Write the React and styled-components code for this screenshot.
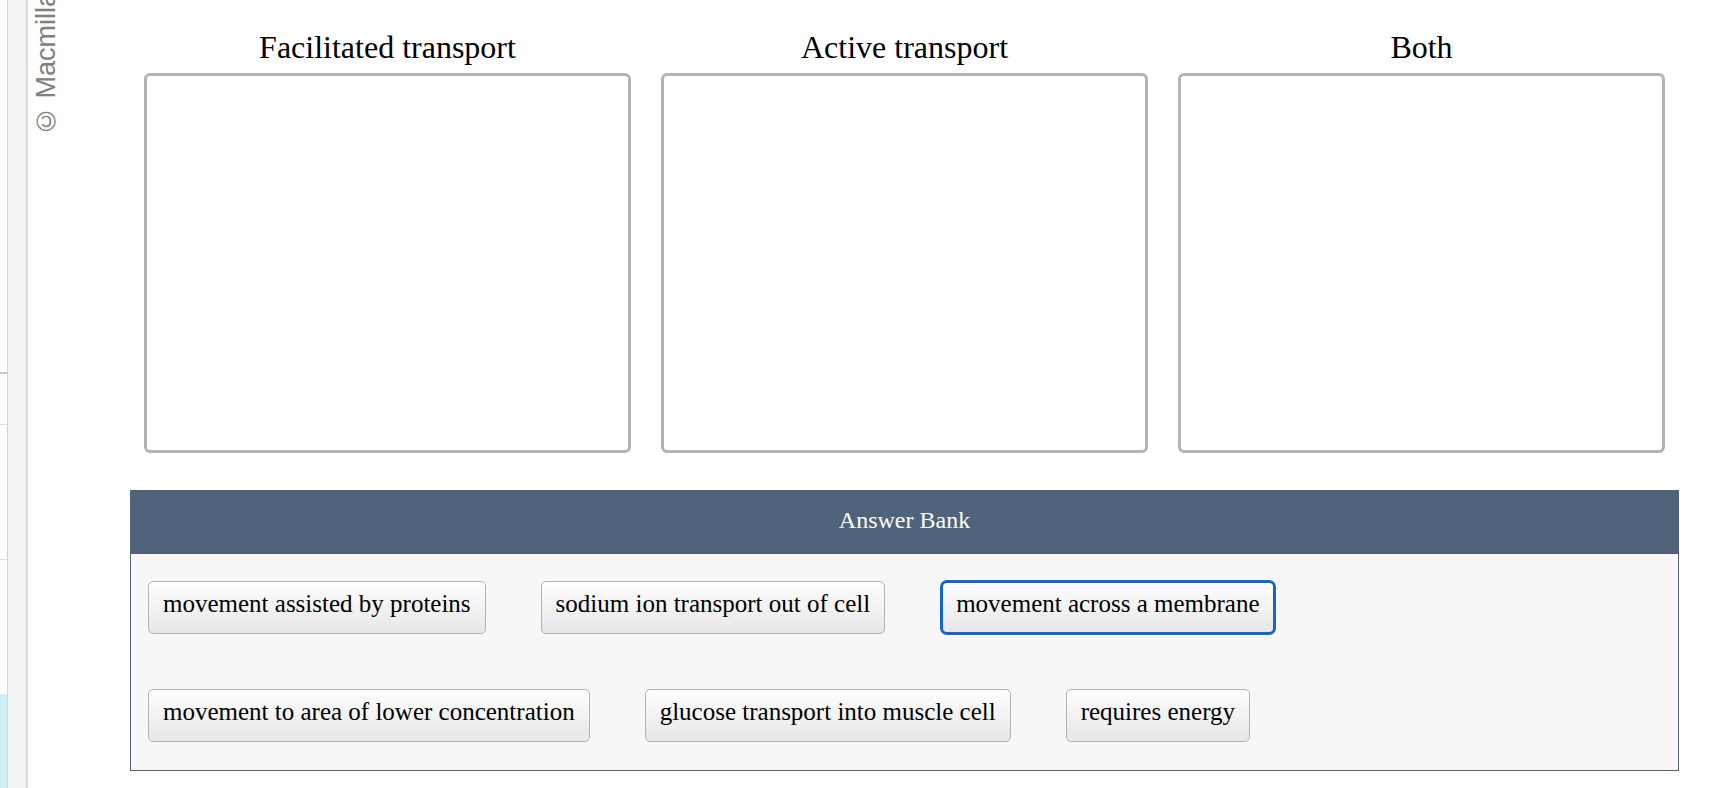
import React from "react";
import styled, { createGlobalStyle } from "styled-components";

const GlobalStyle = createGlobalStyle`
  html, body {
    margin: 0;
    padding: 0;
    background: #ffffff;
  }
  body {
    font-family: "Liberation Serif", "Times New Roman", serif;
    color: #000;
    overflow: hidden;
  }
`;

const Page = styled.div`
  display: flex;
  height: 788px;
  overflow: hidden;
`;

const Sidebar = styled.div`
  display: flex;
  flex: 0 0 28px;
  height: 100%;
`;

const Pane = styled.div`
  display: flex;
  flex-direction: column;
  flex: 0 0 7px;
`;

const Segment = styled.div`
  height: ${p => (p.h ? `${p.h}px` : "auto")};
  flex: ${p => (p.h ? "0 0 auto" : "1 1 auto")};
  background: ${p => p.bg || "#ffffff"};
  border-bottom: ${p => p.line || "none"};
`;

const Rail = styled.div`
  flex: 1 1 auto;
  background: #f2f2f2;
  border-left: 1px solid #d4d4d4;
  border-right: 2px solid #dcdcdc;
`;

const CopyrightCol = styled.div`
  flex: 0 0 102px;
  padding-left: 6px;
  box-sizing: border-box;
`;

const Copyright = styled.div`
  writing-mode: vertical-rl;
  transform: rotate(180deg);
  height: 136px;
  width: 24px;
  overflow: hidden;
  white-space: nowrap;
  font-family: "Liberation Sans", Arial, sans-serif;
  font-size: 27px;
  line-height: 24px;
  color: #808080;
`;

const Main = styled.div`
  flex: 0 0 1549px;
  padding-top: 29px;
`;

const Columns = styled.div`
  display: grid;
  grid-template-columns: repeat(3, 487px);
  column-gap: 30px;
  padding: 0 14px;
`;

const Column = styled.div`
  display: flex;
  flex-direction: column;
`;

const Title = styled.div`
  font-size: 32px;
  line-height: 36px;
  text-align: center;
  margin-bottom: 8px;
`;

const DropBox = styled.div`
  height: 380px;
  box-sizing: border-box;
  border: 3px solid #b4b4b4;
  border-radius: 6px;
  background: #ffffff;
`;

const Bank = styled.div`
  margin-top: 37px;
  border: 1px solid #4f637a;
  background: #f7f7f7;
`;

const BankHeader = styled.div`
  height: 63px;
  box-sizing: border-box;
  padding-bottom: 4px;
  line-height: 59px;
  background: #4f637a;
  color: #ffffff;
  font-size: 24px;
  text-align: center;
`;

const ChipList = styled.div`
  display: flex;
  flex-wrap: wrap;
  gap: 55px;
  padding: 27px 17px 28px;
`;

const Chip = styled.div`
  font-size: 25px;
  line-height: 29px;
  white-space: nowrap;
  border-radius: ${p => (p.selected ? "7px" : "5px")};
  background: linear-gradient(#fefefe, #e7e7e7);
  border: ${p => (p.selected ? "3px solid #1166d2" : "1px solid #b3b3b3")};
  padding: ${p => (p.selected ? "6px 13px 14px" : "7px 14px 15px")};
  margin: ${p => (p.selected ? "-1px 0" : "0")};
  box-shadow: ${p => (p.selected ? "0 0 0 1px #ffffff" : "none")};
`;

const columns = ["Facilitated transport", "Active transport", "Both"];

const answers = [
  "movement assisted by proteins",
  "sodium ion transport out of cell",
  "movement across a membrane",
  "movement to area of lower concentration",
  "glucose transport into muscle cell",
  "requires energy",
];

export default function App() {
  return (
    <Page>
      <GlobalStyle />
      <Sidebar>
        <Pane>
          <Segment h={372} line="2px solid #c9c9c9" />
          <Segment h={50} line="1px solid #dedede" />
          <Segment h={134} line="1px solid #dedede" />
          <Segment h={134} />
          <Segment bg="#cdf0f5" />
        </Pane>
        <Rail />
      </Sidebar>
      <CopyrightCol>
        <Copyright>© Macmillan Learning</Copyright>
      </CopyrightCol>
      <Main>
        <Columns>
          {columns.map(title => (
            <Column key={title}>
              <Title>{title}</Title>
              <DropBox />
            </Column>
          ))}
        </Columns>
        <Bank>
          <BankHeader>Answer Bank</BankHeader>
          <ChipList>
            {answers.map(a => (
              <Chip key={a} selected={a === "movement across a membrane"}>
                {a}
              </Chip>
            ))}
          </ChipList>
        </Bank>
      </Main>
    </Page>
  );
}
